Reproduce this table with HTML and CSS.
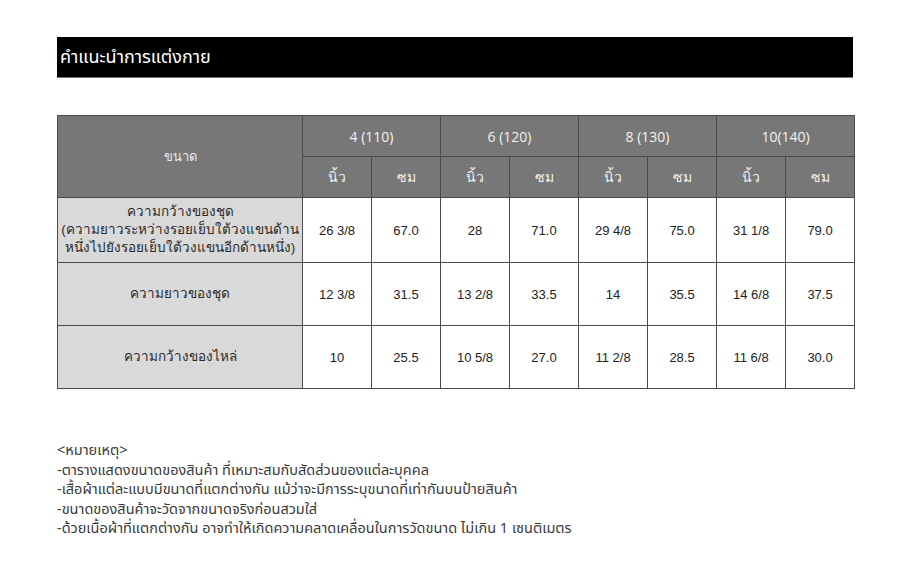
FILE: index.html
```html
<!DOCTYPE html>
<html lang="th">
<head>
<meta charset="utf-8">
<link rel="stylesheet" href="styles.css">
</head>
<body>
<div class="page">
  <div class="title-bar">คำแนะนำการแต่งกาย</div>
  <table class="size-table">
    <colgroup>
      <col class="c-label">
      <col class="c-val"><col class="c-val"><col class="c-val"><col class="c-val">
      <col class="c-val"><col class="c-val"><col class="c-val"><col class="c-val">
    </colgroup>
    <thead>
      <tr class="h1">
        <th rowspan="2" class="h-label">ขนาด</th>
        <th colspan="2">4 (110)</th>
        <th colspan="2">6 (120)</th>
        <th colspan="2">8 (130)</th>
        <th colspan="2">10(140)</th>
      </tr>
      <tr class="h2">
        <th>นิ้ว</th><th>ซม</th>
        <th>นิ้ว</th><th>ซม</th>
        <th>นิ้ว</th><th>ซม</th>
        <th>นิ้ว</th><th>ซม</th>
      </tr>
    </thead>
    <tbody>
      <tr class="r1">
        <th>ความกว้างของชุด<br>(ความยาวระหว่างรอยเย็บใต้วงแขนด้าน<br>หนึ่งไปยังรอยเย็บใต้วงแขนอีกด้านหนึ่ง)</th>
        <td>26 3/8</td><td>67.0</td><td>28</td><td>71.0</td><td>29 4/8</td><td>75.0</td><td>31 1/8</td><td>79.0</td>
      </tr>
      <tr class="r2">
        <th>ความยาวของชุด</th>
        <td>12 3/8</td><td>31.5</td><td>13 2/8</td><td>33.5</td><td>14</td><td>35.5</td><td>14 6/8</td><td>37.5</td>
      </tr>
      <tr class="r3">
        <th>ความกว้างของไหล่</th>
        <td>10</td><td>25.5</td><td>10 5/8</td><td>27.0</td><td>11 2/8</td><td>28.5</td><td>11 6/8</td><td>30.0</td>
      </tr>
    </tbody>
  </table>
  <div class="notes">
    <p>&lt;หมายเหตุ&gt;</p>
    <p>-ตารางแสดงขนาดของสินค้า ที่เหมาะสมกับสัดส่วนของแต่ละบุคคล</p>
    <p>-เสื้อผ้าแต่ละแบบมีขนาดที่แตกต่างกัน แม้ว่าจะมีการระบุขนาดที่เท่ากันบนป้ายสินค้า</p>
    <p>-ขนาดของสินค้าจะวัดจากขนาดจริงก่อนสวมใส่</p>
    <p>-ด้วยเนื้อผ้าที่แตกต่างกัน อาจทำให้เกิดความคลาดเคลื่อนในการวัดขนาด ไม่เกิน 1 เซนติเมตร</p>
  </div>
</div>
</body>
</html>
```
FILE: styles.css
```css
html, body {
  margin: 0;
  padding: 0;
  background: #ffffff;
}
body {
  font-family: "Noto Sans", "Noto Sans Thai", "Liberation Sans", sans-serif;
  color: #222;
}
.page {
  width: 796px;
  padding: 37px 0 0 57px;
}
.title-bar {
  background: #000;
  color: #fff;
  height: 41px;
  box-sizing: border-box;
  padding: 0 0 0 3px;
  display: flex;
  align-items: center;
  font-size: 18px;
  border-bottom: 1px solid #777;
}
.size-table {
  margin-top: 37px;
  width: 796px;
  border-collapse: collapse;
  table-layout: fixed;
  font-family: "Liberation Sans", "Noto Sans", sans-serif;
}
.c-label { width: 245px; }
.c-val { width: 69px; }
.size-table th,
.size-table td {
  border: 1px solid #4a4a4a;
  text-align: center;
  padding: 0;
}
.size-table thead th {
  background: #777777;
  color: #f2f2f2;
  font-weight: normal;
  font-size: 14px;
  font-family: "Open Sans", "Noto Sans", sans-serif;
}
.size-table thead .h-label {
  font-size: 13px;
  color: #eaeaea;
}
.h1 th { height: 40px; }
.h2 th { height: 40px; font-size: 14px; }
.size-table tbody th {
  background: #d9d9d9;
  font-weight: normal;
  font-size: 13.5px;
  line-height: 18px;
  color: #2a2a2a;
}
.size-table tbody td {
  font-size: 13px;
  color: #222;
}
.r1 th, .r1 td { height: 64px; }
.r2 th, .r2 td { height: 62px; }
.r3 th, .r3 td { height: 62px; }
.notes {
  margin-top: 51px;
  font-size: 14.5px;
  color: #3a3a3a;
  line-height: 19.5px;
}
.notes p { margin: 0; }
```
